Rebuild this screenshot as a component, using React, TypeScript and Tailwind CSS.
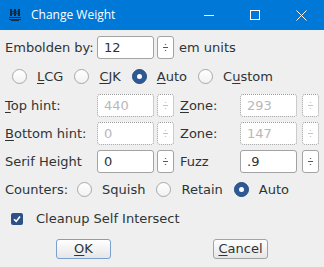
import type { ReactNode } from 'react'

const Spin = ({ disabled = false }: { disabled?: boolean }) => (
  <div
    className={`flex h-[23px] w-[17px] items-center justify-center rounded-[3px] bg-white ${
      disabled ? 'border border-dotted border-[#9a9a9a]' : 'border border-[#a3a3a3]'
    }`}
  >
    <svg width="7" height="9" viewBox="0 0 7 9" className={disabled ? 'text-[#c4c4c4]' : 'text-[#555]'}>
      <path d="M2.5 2 L3.5 0.8 L4.5 2 Z" fill="currentColor" />
      <rect x="1" y="4" width="5" height="1" fill="currentColor" />
      <path d="M2.5 7 L3.5 8.2 L4.5 7 Z" fill="currentColor" />
    </svg>
  </div>
)

const Field = ({ value, disabled = false }: { value: string; disabled?: boolean }) => (
  <div
    className={`flex h-[23px] w-[57px] items-center rounded-[3px] bg-white pl-[6px] ${
      disabled ? 'border border-dotted border-[#9a9a9a] text-[#b8b8b8]' : 'border border-[#a3a3a3] text-[#2e3436]'
    }`}
  >
    {value}
  </div>
)

const Radio = ({ on = false }: { on?: boolean }) =>
  on ? (
    <div className="flex h-[15px] w-[15px] items-center justify-center rounded-full bg-[#2d5a94] border border-[#234a7c]">
      <div className="h-[5px] w-[5px] rounded-full bg-white" />
    </div>
  ) : (
    <div className="h-[15px] w-[15px] rounded-full border border-[#a8a8a8] bg-gradient-to-b from-white to-[#f2f2f2]" />
  )

const Opt = ({ on, children }: { on?: boolean; children: ReactNode }) => (
  <div className="flex items-center gap-[10px]">
    <Radio on={on} />
    <span>{children}</span>
  </div>
)

const U = ({ children }: { children: ReactNode }) => (
  <span className="underline underline-offset-[2px] decoration-1">{children}</span>
)

export default function App() {
  return (
    <div className="w-[324px] h-[267px] bg-[#efefef] overflow-hidden">
      {/* title bar */}
      <div className="flex h-[30px] items-center bg-[#0078d7] text-white">
        <svg width="12" height="12" viewBox="0 0 12 12" className="ml-[9px]">
          <rect x="1" y="0" width="2" height="7" fill="#1b2a3a" />
          <rect x="5" y="0" width="2" height="7" fill="#1b2a3a" />
          <rect x="9" y="0" width="2" height="7" fill="#1b2a3a" />
          <path d="M1 1 L11 6 M11 1 L1 6" stroke="#1b2a3a" strokeWidth="1" />
          <rect x="0" y="8" width="12" height="1" fill="#1b2a3a" />
          <rect x="0" y="10" width="12" height="1" fill="#1b2a3a" />
          <rect x="2" y="11" width="8" height="1" fill="#1b2a3a" />
        </svg>
        <span className="ml-[10px] text-[12px]" style={{ fontFamily: '"Open Sans", "Noto Sans", sans-serif' }}>
          Change Weight
        </span>
        <div className="ml-auto flex items-center">
          <div className="flex w-[46px] justify-center">
            <div className="h-px w-[10px] bg-white" />
          </div>
          <div className="flex w-[46px] justify-center">
            <div className="h-[10px] w-[10px] border border-white" />
          </div>
          <div className="flex w-[46px] justify-center">
            <svg width="11" height="11" viewBox="0 0 11 11">
              <path d="M0.5 0.5 L10.5 10.5 M10.5 0.5 L0.5 10.5" stroke="white" strokeWidth="1" />
            </svg>
          </div>
        </div>
      </div>

      {/* body */}
      <div
        className="flex flex-col pl-[5px] pt-[6px] text-[13px] text-[#2e3436]"
        style={{ fontFamily: '"DejaVu Sans", sans-serif' }}
      >
        <div className="flex h-[23px] items-center">
          <span className="w-[92px]">Embolden by:</span>
          <Field value="12" />
          <div className="ml-[3px]"><Spin /></div>
          <span className="ml-[5px]">em units</span>
        </div>

        <div className="mt-[6px] flex h-[23px] items-center gap-[11px] pl-[7px]">
          <Opt><U>L</U>CG</Opt>
          <Opt><U>C</U>JK</Opt>
          <Opt on><U>A</U>uto</Opt>
          <Opt>C<U>u</U>stom</Opt>
        </div>

        <div className="mt-[6px] flex h-[23px] items-center">
          <span className="w-[92px]"><U>T</U>op hint:</span>
          <Field value="440" disabled />
          <div className="ml-[3px]"><Spin disabled /></div>
          <span className="ml-[6px] w-[60px]"><U>Z</U>one:</span>
          <Field value="293" disabled />
          <div className="ml-[5px]"><Spin disabled /></div>
        </div>

        <div className="mt-[5px] flex h-[23px] items-center">
          <span className="w-[92px]"><U>B</U>ottom hint:</span>
          <Field value="0" disabled />
          <div className="ml-[3px]"><Spin disabled /></div>
          <span className="ml-[6px] w-[60px]">Zone:</span>
          <Field value="147" disabled />
          <div className="ml-[5px]"><Spin disabled /></div>
        </div>

        <div className="mt-[5px] flex h-[23px] items-center">
          <span className="w-[92px]">Serif Height</span>
          <Field value="0" />
          <div className="ml-[3px]"><Spin /></div>
          <span className="ml-[6px] w-[60px]">Fuzz</span>
          <Field value=".9" />
          <div className="ml-[5px]"><Spin /></div>
        </div>

        <div className="mt-[5px] flex h-[23px] items-center gap-[11px]">
          <span className="mr-[-2px]">Counters:</span>
          <Opt>Squish</Opt>
          <Opt>Retain</Opt>
          <Opt on>Auto</Opt>
        </div>

        <div className="mt-[6px] flex h-[23px] items-center pl-[6px]">
          <div className="flex h-[12px] w-[12px] items-center justify-center rounded-[2px] bg-[#2d5087]">
            <svg width="8" height="8" viewBox="0 0 8 8">
              <path d="M1 4.2 L3.2 6.4 L7 1.5" stroke="white" strokeWidth="1.6" fill="none" />
            </svg>
          </div>
          <span className="ml-[13px]">Cleanup Self Intersect</span>
        </div>

        <div className="mt-[9px] flex items-center">
          <button className="ml-[51px] flex h-[20px] w-[55px] items-center justify-center rounded-[3px] border border-[#7a9fd0] bg-gradient-to-b from-white to-[#e6e6e6]">
            <U>O</U>K
          </button>
          <button className="ml-[102px] flex h-[20px] w-[55px] items-center justify-center rounded-[3px] border border-[#a3a3a3] bg-gradient-to-b from-white to-[#e6e6e6]">
            <U>C</U>ancel
          </button>
        </div>
      </div>
    </div>
  )
}
